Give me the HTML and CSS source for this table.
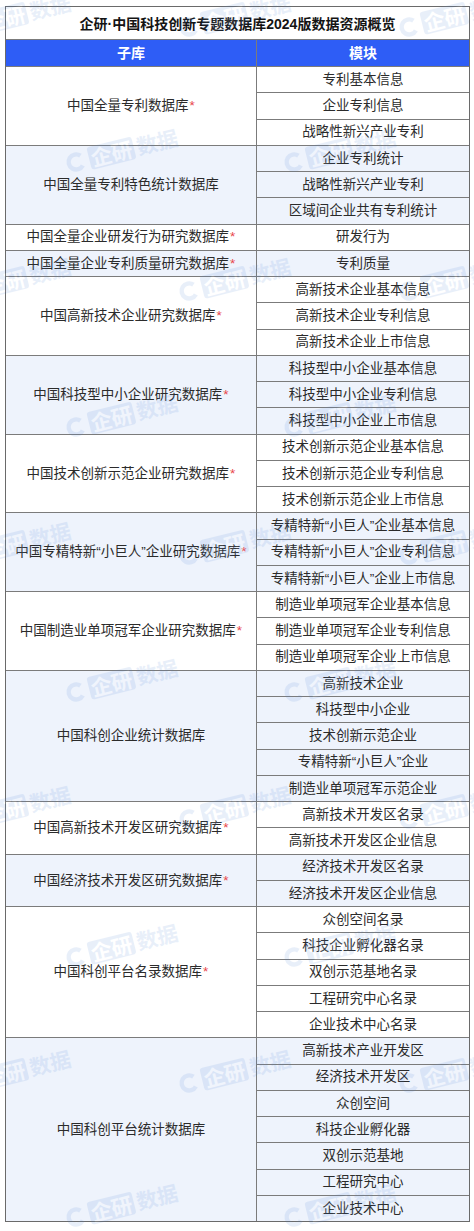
FILE: index.html
```html
<!DOCTYPE html>
<html lang="zh-CN">
<head>
<meta charset="utf-8">
<title>企研·中国科技创新专题数据库2024版数据资源概览</title>
<link rel="stylesheet" href="styles.css">
</head>
<body>
<div class="page">
  <div class="sheet">
    <div class="title">企研·中国科技创新专题数据库2024版数据资源概览</div>
    <div class="head">子库</div>
    <div class="head">模块</div>

    <div class="sub span3">中国全量专利数据库<span class="star">*</span></div>
    <div class="mod">专利基本信息</div>
    <div class="mod">企业专利信息</div>
    <div class="mod">战略性新兴产业专利</div>

    <div class="sub span3 alt">中国全量专利特色统计数据库</div>
    <div class="mod alt">企业专利统计</div>
    <div class="mod alt">战略性新兴产业专利</div>
    <div class="mod alt">区域间企业共有专利统计</div>

    <div class="sub span1">中国全量企业研发行为研究数据库<span class="star">*</span></div>
    <div class="mod">研发行为</div>

    <div class="sub span1 alt">中国全量企业专利质量研究数据库<span class="star">*</span></div>
    <div class="mod alt">专利质量</div>

    <div class="sub span3">中国高新技术企业研究数据库<span class="star">*</span></div>
    <div class="mod">高新技术企业基本信息</div>
    <div class="mod">高新技术企业专利信息</div>
    <div class="mod">高新技术企业上市信息</div>

    <div class="sub span3 alt">中国科技型中小企业研究数据库<span class="star">*</span></div>
    <div class="mod alt">科技型中小企业基本信息</div>
    <div class="mod alt">科技型中小企业专利信息</div>
    <div class="mod alt">科技型中小企业上市信息</div>

    <div class="sub span3">中国技术创新示范企业研究数据库<span class="star">*</span></div>
    <div class="mod">技术创新示范企业基本信息</div>
    <div class="mod">技术创新示范企业专利信息</div>
    <div class="mod">技术创新示范企业上市信息</div>

    <div class="sub span3 alt">中国专精特新“小巨人”企业研究数据库<span class="star">*</span></div>
    <div class="mod alt">专精特新“小巨人”企业基本信息</div>
    <div class="mod alt">专精特新“小巨人”企业专利信息</div>
    <div class="mod alt">专精特新“小巨人”企业上市信息</div>

    <div class="sub span3">中国制造业单项冠军企业研究数据库<span class="star">*</span></div>
    <div class="mod">制造业单项冠军企业基本信息</div>
    <div class="mod">制造业单项冠军企业专利信息</div>
    <div class="mod">制造业单项冠军企业上市信息</div>

    <div class="sub span5 alt">中国科创企业统计数据库</div>
    <div class="mod alt">高新技术企业</div>
    <div class="mod alt">科技型中小企业</div>
    <div class="mod alt">技术创新示范企业</div>
    <div class="mod alt">专精特新“小巨人”企业</div>
    <div class="mod alt">制造业单项冠军示范企业</div>

    <div class="sub span2">中国高新技术开发区研究数据库<span class="star">*</span></div>
    <div class="mod">高新技术开发区名录</div>
    <div class="mod">高新技术开发区企业信息</div>

    <div class="sub span2 alt">中国经济技术开发区研究数据库<span class="star">*</span></div>
    <div class="mod alt">经济技术开发区名录</div>
    <div class="mod alt">经济技术开发区企业信息</div>

    <div class="sub span5">中国科创平台名录数据库<span class="star">*</span></div>
    <div class="mod">众创空间名录</div>
    <div class="mod">科技企业孵化器名录</div>
    <div class="mod">双创示范基地名录</div>
    <div class="mod">工程研究中心名录</div>
    <div class="mod">企业技术中心名录</div>

    <div class="sub span7 alt">中国科创平台统计数据库</div>
    <div class="mod alt">高新技术产业开发区</div>
    <div class="mod alt">经济技术开发区</div>
    <div class="mod alt">众创空间</div>
    <div class="mod alt">科技企业孵化器</div>
    <div class="mod alt">双创示范基地</div>
    <div class="mod alt">工程研究中心</div>
    <div class="mod alt">企业技术中心</div>
  </div>

  <div class="marks" aria-hidden="true">
    <div class="wm y0 xa0"><svg class="logo" viewBox="0 0 20 20"><path d="M15.5 5.2 A7.2 7.2 0 1 0 15.5 14.8" fill="none" stroke="currentColor" stroke-width="4.2"/></svg><span class="box">企研</span><span class="txt">数据</span></div>
    <div class="wm y0 xa1"><svg class="logo" viewBox="0 0 20 20"><path d="M15.5 5.2 A7.2 7.2 0 1 0 15.5 14.8" fill="none" stroke="currentColor" stroke-width="4.2"/></svg><span class="box">企研</span><span class="txt">数据</span></div>
    <div class="wm y0 xa2"><svg class="logo" viewBox="0 0 20 20"><path d="M15.5 5.2 A7.2 7.2 0 1 0 15.5 14.8" fill="none" stroke="currentColor" stroke-width="4.2"/></svg><span class="box">企研</span><span class="txt">数据</span></div>
    <div class="wm y1 xb0"><svg class="logo" viewBox="0 0 20 20"><path d="M15.5 5.2 A7.2 7.2 0 1 0 15.5 14.8" fill="none" stroke="currentColor" stroke-width="4.2"/></svg><span class="box">企研</span><span class="txt">数据</span></div>
    <div class="wm y1 xb1"><svg class="logo" viewBox="0 0 20 20"><path d="M15.5 5.2 A7.2 7.2 0 1 0 15.5 14.8" fill="none" stroke="currentColor" stroke-width="4.2"/></svg><span class="box">企研</span><span class="txt">数据</span></div>
    <div class="wm y2 xa0"><svg class="logo" viewBox="0 0 20 20"><path d="M15.5 5.2 A7.2 7.2 0 1 0 15.5 14.8" fill="none" stroke="currentColor" stroke-width="4.2"/></svg><span class="box">企研</span><span class="txt">数据</span></div>
    <div class="wm y2 xa1"><svg class="logo" viewBox="0 0 20 20"><path d="M15.5 5.2 A7.2 7.2 0 1 0 15.5 14.8" fill="none" stroke="currentColor" stroke-width="4.2"/></svg><span class="box">企研</span><span class="txt">数据</span></div>
    <div class="wm y2 xa2"><svg class="logo" viewBox="0 0 20 20"><path d="M15.5 5.2 A7.2 7.2 0 1 0 15.5 14.8" fill="none" stroke="currentColor" stroke-width="4.2"/></svg><span class="box">企研</span><span class="txt">数据</span></div>
    <div class="wm y3 xb0"><svg class="logo" viewBox="0 0 20 20"><path d="M15.5 5.2 A7.2 7.2 0 1 0 15.5 14.8" fill="none" stroke="currentColor" stroke-width="4.2"/></svg><span class="box">企研</span><span class="txt">数据</span></div>
    <div class="wm y3 xb1"><svg class="logo" viewBox="0 0 20 20"><path d="M15.5 5.2 A7.2 7.2 0 1 0 15.5 14.8" fill="none" stroke="currentColor" stroke-width="4.2"/></svg><span class="box">企研</span><span class="txt">数据</span></div>
    <div class="wm y4 xa0"><svg class="logo" viewBox="0 0 20 20"><path d="M15.5 5.2 A7.2 7.2 0 1 0 15.5 14.8" fill="none" stroke="currentColor" stroke-width="4.2"/></svg><span class="box">企研</span><span class="txt">数据</span></div>
    <div class="wm y4 xa1"><svg class="logo" viewBox="0 0 20 20"><path d="M15.5 5.2 A7.2 7.2 0 1 0 15.5 14.8" fill="none" stroke="currentColor" stroke-width="4.2"/></svg><span class="box">企研</span><span class="txt">数据</span></div>
    <div class="wm y4 xa2"><svg class="logo" viewBox="0 0 20 20"><path d="M15.5 5.2 A7.2 7.2 0 1 0 15.5 14.8" fill="none" stroke="currentColor" stroke-width="4.2"/></svg><span class="box">企研</span><span class="txt">数据</span></div>
    <div class="wm y5 xb0"><svg class="logo" viewBox="0 0 20 20"><path d="M15.5 5.2 A7.2 7.2 0 1 0 15.5 14.8" fill="none" stroke="currentColor" stroke-width="4.2"/></svg><span class="box">企研</span><span class="txt">数据</span></div>
    <div class="wm y5 xb1"><svg class="logo" viewBox="0 0 20 20"><path d="M15.5 5.2 A7.2 7.2 0 1 0 15.5 14.8" fill="none" stroke="currentColor" stroke-width="4.2"/></svg><span class="box">企研</span><span class="txt">数据</span></div>
    <div class="wm y6 xa0"><svg class="logo" viewBox="0 0 20 20"><path d="M15.5 5.2 A7.2 7.2 0 1 0 15.5 14.8" fill="none" stroke="currentColor" stroke-width="4.2"/></svg><span class="box">企研</span><span class="txt">数据</span></div>
    <div class="wm y6 xa1"><svg class="logo" viewBox="0 0 20 20"><path d="M15.5 5.2 A7.2 7.2 0 1 0 15.5 14.8" fill="none" stroke="currentColor" stroke-width="4.2"/></svg><span class="box">企研</span><span class="txt">数据</span></div>
    <div class="wm y6 xa2"><svg class="logo" viewBox="0 0 20 20"><path d="M15.5 5.2 A7.2 7.2 0 1 0 15.5 14.8" fill="none" stroke="currentColor" stroke-width="4.2"/></svg><span class="box">企研</span><span class="txt">数据</span></div>
    <div class="wm y7 xb0"><svg class="logo" viewBox="0 0 20 20"><path d="M15.5 5.2 A7.2 7.2 0 1 0 15.5 14.8" fill="none" stroke="currentColor" stroke-width="4.2"/></svg><span class="box">企研</span><span class="txt">数据</span></div>
    <div class="wm y7 xb1"><svg class="logo" viewBox="0 0 20 20"><path d="M15.5 5.2 A7.2 7.2 0 1 0 15.5 14.8" fill="none" stroke="currentColor" stroke-width="4.2"/></svg><span class="box">企研</span><span class="txt">数据</span></div>
    <div class="wm y8 xa0"><svg class="logo" viewBox="0 0 20 20"><path d="M15.5 5.2 A7.2 7.2 0 1 0 15.5 14.8" fill="none" stroke="currentColor" stroke-width="4.2"/></svg><span class="box">企研</span><span class="txt">数据</span></div>
    <div class="wm y8 xa1"><svg class="logo" viewBox="0 0 20 20"><path d="M15.5 5.2 A7.2 7.2 0 1 0 15.5 14.8" fill="none" stroke="currentColor" stroke-width="4.2"/></svg><span class="box">企研</span><span class="txt">数据</span></div>
    <div class="wm y8 xa2"><svg class="logo" viewBox="0 0 20 20"><path d="M15.5 5.2 A7.2 7.2 0 1 0 15.5 14.8" fill="none" stroke="currentColor" stroke-width="4.2"/></svg><span class="box">企研</span><span class="txt">数据</span></div>
    <div class="wm y9 xb0"><svg class="logo" viewBox="0 0 20 20"><path d="M15.5 5.2 A7.2 7.2 0 1 0 15.5 14.8" fill="none" stroke="currentColor" stroke-width="4.2"/></svg><span class="box">企研</span><span class="txt">数据</span></div>
    <div class="wm y9 xb1"><svg class="logo" viewBox="0 0 20 20"><path d="M15.5 5.2 A7.2 7.2 0 1 0 15.5 14.8" fill="none" stroke="currentColor" stroke-width="4.2"/></svg><span class="box">企研</span><span class="txt">数据</span></div>
  </div>
</div>
</body>
</html>
```
FILE: styles.css
```css
html, body {
  margin: 0;
  padding: 0;
  background: #ffffff;
}

body {
  font-family: "Liberation Sans", "Noto Sans CJK SC", sans-serif;
  color: #2b2b2b;
  overflow: hidden;
}

.page {
  position: relative;
  width: 474px;
  height: 1231px;
  padding: 6px 0 0 5px;
  box-sizing: border-box;
  overflow: hidden;
}

.sheet {
  display: grid;
  grid-template-columns: 250px 212px;
  grid-template-rows: 32px 26px repeat(44, 25.25px);
  gap: 1px;
  width: 463px;
  background: #7b7b7b;
  border: 1px solid #6a6a6a;
}

.sheet > div {
  display: flex;
  align-items: center;
  justify-content: center;
  background: #ffffff;
  font-size: 13.5px;
  line-height: 1;
  white-space: nowrap;
}

.sheet > .title {
  grid-column: 1 / span 2;
  font-size: 14px;
  font-weight: bold;
  color: #141414;
  padding-top: 1px;
}

.sheet > .head {
  background: #2e5df6;
  color: #ffffff;
  font-weight: bold;
  font-size: 14px;
}

.sheet > .sub { grid-column: 1; }
.sheet > .mod { grid-column: 2; }

.sheet > .alt { background: #eef3fc; }

.span1 { grid-row: span 1; }
.span2 { grid-row: span 2; }
.span3 { grid-row: span 3; }
.span5 { grid-row: span 5; }
.span7 { grid-row: span 7; }

.star {
  color: #e8454a;
  margin-left: 1px;
}

/* watermark overlay */
.marks {
  position: absolute;
  inset: 0;
  pointer-events: none;
}

.wm {
  position: absolute;
  display: flex;
  align-items: center;
  gap: 3px;
  width: 116px;
  height: 26px;
  color: #4a82d6;
  opacity: 0.12;
  transform: rotate(-14deg);
  font-family: "Noto Sans CJK SC", sans-serif;
  font-weight: bold;
  font-size: 21px;
  line-height: 1;
}

.logo {
  width: 21px;
  height: 21px;
  flex: none;
}

.box {
  background: currentColor;
  border-radius: 3px;
  padding: 1px 2px;
}

.box {
  color: #4a82d6;
  background: #4a82d6;
  -webkit-text-stroke: 0;
  text-shadow: none;
}

.box {
  color: #ffffff;
  background: #4a82d6;
}

.txt { color: #4a82d6; }

.y0 { top: 2px; }
.y1 { top: 137px; }
.y2 { top: 266px; }
.y3 { top: 402px; }
.y4 { top: 530px; }
.y5 { top: 667px; }
.y6 { top: 794px; }
.y7 { top: 932px; }
.y8 { top: 1058px; }
.y9 { top: 1192px; }

.xa0 { left: -43px; }
.xa1 { left: 177px; }
.xa2 { left: 397px; }
.xb0 { left: 64px; }
.xb1 { left: 282px; }
```
